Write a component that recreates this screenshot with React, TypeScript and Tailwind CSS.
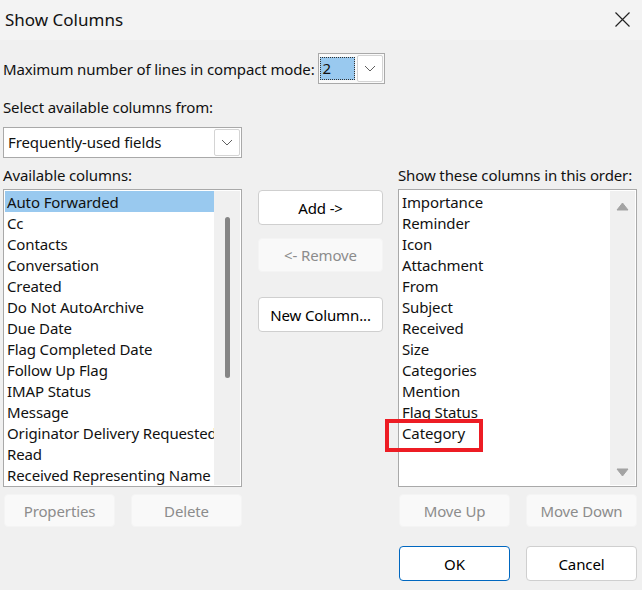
const availableColumns = [
  'Auto Forwarded',
  'Cc',
  'Contacts',
  'Conversation',
  'Created',
  'Do Not AutoArchive',
  'Due Date',
  'Flag Completed Date',
  'Follow Up Flag',
  'IMAP Status',
  'Message',
  'Originator Delivery Requested',
  'Read',
  'Received Representing Name',
];

const shownColumns = [
  'Importance',
  'Reminder',
  'Icon',
  'Attachment',
  'From',
  'Subject',
  'Received',
  'Size',
  'Categories',
  'Mention',
  'Flag Status',
  'Category',
];

function Chevron() {
  return (
    <svg width="12" height="7" viewBox="0 0 12 7" fill="none" aria-hidden="true">
      <path d="M1 1l5 5 5-5" stroke="#606060" strokeWidth="1" />
    </svg>
  );
}

function ComboButton() {
  return (
    <div className="flex h-[27px] w-[26px] shrink-0 items-center justify-center rounded-[2px] border border-[#d4d4d4] bg-white">
      <Chevron />
    </div>
  );
}

function Button({
  label,
  disabled,
  primary,
  className = '',
}: {
  label: string;
  disabled?: boolean;
  primary?: boolean;
  className?: string;
}) {
  const tone = disabled
    ? 'border-[#f4f4f4] bg-[#f9f9f9] text-[#8c8c8c]'
    : primary
      ? 'border-[#0067c0] bg-white text-black'
      : 'border-[#cfcfcf] bg-white text-black';
  return (
    <div className={`flex items-center justify-center rounded-[4px] border pt-[1px] text-[15px] tracking-[-0.12px] ${tone} ${className}`}>
      {label}
    </div>
  );
}

function Triangle({ down }: { down?: boolean }) {
  return (
    <svg width="13" height="9" viewBox="0 0 13 9" aria-hidden="true">
      <path d={down ? 'M1 1h11L6.5 8z' : 'M6.5 1L12 8H1z'} fill="#a3a3a3" stroke="#a3a3a3" strokeLinejoin="round" />
    </svg>
  );
}

export default function App() {
  return (
    <div className="relative h-[590px] w-[642px] overflow-hidden bg-[#f0f0f0] font-['Noto_Sans',sans-serif] text-[15px] leading-[23px] tracking-[-0.12px] text-[#111]">
      {/* Title bar */}
      <div className="flex h-[40px] items-center justify-between bg-[#f3f3f3] pb-[2px] pl-[5px] pr-[12px]">
        <span className="text-[17px] tracking-[0px]">Show Columns</span>
        <svg width="15" height="15" viewBox="0 0 15 15" fill="none" aria-hidden="true">
          <path d="M0.5 0.5l14 14M14.5 0.5l-14 14" stroke="#222" strokeWidth="1.2" />
        </svg>
      </div>

      <div className="px-[3px]">
        <div className="mt-[13px] flex h-[31px] items-center gap-[3px]">
          <span className="pt-[2px]">Maximum number of lines in compact mode:</span>
          <div className="flex h-[31px] w-[67px] items-center gap-[2px] border border-[#a9a9a9] bg-[#fafafa] px-[1px]">
            <div className="flex h-[23px] w-[35px] items-center border border-dotted border-[#333] bg-[#99c9ef] pl-[2px]">2</div>
            <ComboButton />
          </div>
        </div>

        <div className="mt-[12px]">Select available columns from:</div>

        <div className="mt-[8px] flex h-[31px] w-[239px] items-center justify-between border border-[#a9a9a9] bg-white pl-[4px] pr-[1px]">
          <span>Frequently-used fields</span>
          <ComboButton />
        </div>

        <div className="mt-[6px] flex">
          {/* Available columns */}
          <div className="w-[239px]">
            <div className="h-[25px]">Available columns:</div>
            <div className="flex h-[298px] border border-[#a9a9a9] bg-white p-[1px]">
              <div className="w-[209px] overflow-hidden whitespace-nowrap">
                {availableColumns.map((name, i) => (
                  <div key={name} className={`h-[21px] pl-[2px] ${i === 0 ? 'bg-[#99c9ef]' : ''}`}>
                    {name}
                  </div>
                ))}
              </div>
              <div className="flex flex-1 justify-center bg-[#f0f0f0] pt-[26px]">
                <div className="h-[161px] w-[5px] rounded-full bg-[#858585]" />
              </div>
            </div>
            <div className="mt-[7px] flex justify-between pl-[1px]">
              <Button label="Properties" disabled className="h-[33px] w-[111px]" />
              <Button label="Delete" disabled className="h-[33px] w-[111px]" />
            </div>
          </div>

          {/* Add / remove */}
          <div className="ml-[16px] w-[125px] pt-[26px]">
            <Button label="Add ->" className="h-[35px]" />
            <Button label="<- Remove" disabled className="mt-[13px] h-[34px]" />
            <Button label="New Column..." className="mt-[25px] h-[35px]" />
          </div>

          {/* Shown columns */}
          <div className="ml-[15px] w-[239px]">
            <div className="h-[25px] whitespace-nowrap">Show these columns in this order:</div>
            <div className="flex h-[298px] border border-[#a9a9a9] bg-white p-[1px]">
              <div className="w-[210px] overflow-hidden whitespace-nowrap">
                {shownColumns.map((name) => (
                  <div key={name} className="h-[21px] pl-[2px]">
                    {name}
                  </div>
                ))}
              </div>
              <div className="flex flex-1 flex-col items-center justify-between bg-[#f0f0f0] pb-[8px] pt-[11px]">
                <Triangle />
                <Triangle down />
              </div>
            </div>
            <div className="mt-[7px] flex justify-between pl-[1px]">
              <Button label="Move Up" disabled className="h-[33px] w-[111px]" />
              <Button label="Move Down" disabled className="h-[33px] w-[111px]" />
            </div>
            <div className="mt-[19px] flex justify-between pl-[1px]">
              <Button label="OK" primary className="h-[35px] w-[111px]" />
              <Button label="Cancel" className="h-[35px] w-[111px]" />
            </div>
          </div>
        </div>
      </div>

      {/* Red annotation around the Category row */}
      <div className="absolute left-[385px] top-[419px] h-[33px] w-[98px] border-[4px] border-[#ed1c24]" />
    </div>
  );
}
